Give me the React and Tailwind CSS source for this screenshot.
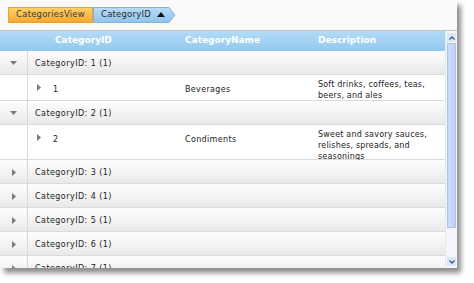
import React from 'react'

const font = { fontFamily: '"DejaVu Sans", Verdana, sans-serif' }

function Tri({ dir = 'right' }) {
  if (dir === 'down') {
    return (
      <svg width="7" height="5" viewBox="0 0 7 5">
        <polygon points="0,0 7,0 3.5,4" fill="#7a7a7a" />
      </svg>
    )
  }
  return (
    <svg width="4" height="7" viewBox="0 0 4 7">
      <polygon points="0,0 4,3.5 0,7" fill="#7a7a7a" />
    </svg>
  )
}

function GroupRow({ id, open }) {
  return (
    <div className="flex shrink-0 h-[24px] bg-gradient-to-b from-[#fefefe] to-[#e9e9e9] border-b border-[#dadada]">
      <div className="w-[28px] border-r border-[#d8d8d8] flex items-center justify-center pt-[1px]">
        <Tri dir={open ? 'down' : 'right'} />
      </div>
      <div className="pl-[7px] pt-[2px] flex items-center text-[8px] tracking-[0.45px] text-[#222]">CategoryID: {id} (1)</div>
    </div>
  )
}

function DataRow({ id, name, desc, h }) {
  return (
    <div className={`flex shrink-0 ${h} bg-white border-b border-[#dadada]`}>
      <div className="w-[28px] border-r border-[#d8d8d8]" />
      <div className="w-[19px] flex items-start pt-[9px] justify-center pl-[2px]">
        <Tri />
      </div>
      <div className="w-[133px] pl-[6px] pt-[9px] text-[8px] tracking-[0.45px] text-[#222]">{id}</div>
      <div className="w-[133px] pl-[5px] pt-[9px] text-[8px] tracking-[0.35px] text-[#222]">{name}</div>
      <div className="flex-1 pl-[5px] pt-[4px] text-[8px] leading-[11px] tracking-[0.2px] text-[#222]">
        {desc.map((l, i) => (
          <div key={i}>{l}</div>
        ))}
      </div>
    </div>
  )
}

export default function App() {
  return (
    <div className="w-[474px] h-[283px] bg-white overflow-hidden" style={font}>
      <div className="w-[457px] h-[268px] bg-[#fcf9fb] flex flex-col overflow-hidden shadow-[4px_5px_5px_rgba(0,0,0,0.45)]">
        {/* breadcrumb */}
        <div className="h-[31px] shrink-0 flex items-center pl-[8px] pb-[1px] border-b border-[#c4c4c4]">
          <div className="h-[16px] w-[85px] justify-center flex items-center text-[8.5px] tracking-[0.2px] text-[#3a3a3a] bg-gradient-to-b from-[#ffd166] to-[#f7a928] border border-[#e5a23a]">
            CategoriesView
          </div>
          <div className="relative h-[16px] w-[83px] flex items-center pl-[8px] text-[8.5px] tracking-[0.2px] text-[#2a2a2a]">
            <svg className="absolute inset-0" width="83" height="16" viewBox="0 0 83 16">
              <defs>
                <linearGradient id="bc" x1="0" y1="0" x2="0" y2="1">
                  <stop offset="0" stopColor="#b9dcf5" />
                  <stop offset="1" stopColor="#8fc4ec" />
                </linearGradient>
              </defs>
              <polygon points="0.5,0.5 76,0.5 82,8 76,15.5 0.5,15.5" fill="url(#bc)" stroke="#7fb4dc" />
            </svg>
            <span className="relative">CategoryID</span>
            <svg className="relative ml-[6px]" width="8" height="5" viewBox="0 0 8 5">
              <polygon points="0,5 4,0 8,5" fill="#111" />
            </svg>
          </div>
        </div>

        <div className="flex-1 flex min-h-0">
          <div className="flex-1 flex flex-col min-w-0 overflow-hidden">
            {/* header */}
            <div className="h-[20px] shrink-0 flex bg-gradient-to-b from-[#b3dbf7] to-[#92c9ef] text-white font-bold text-[9px]">
              <div className="w-[47px]" />
              <div className="w-[133px] pl-[8px] flex items-center">CategoryID</div>
              <div className="w-[133px] pl-[5px] flex items-center">CategoryName</div>
              <div className="flex-1 pl-[5px] flex items-center">Description</div>
            </div>
            <GroupRow id={1} open />
            <DataRow id={1} name="Beverages" desc={['Soft drinks, coffees, teas,', 'beers, and ales']} h="h-[26px]" />
            <GroupRow id={2} open />
            <DataRow
              id={2}
              name="Condiments"
              desc={['Sweet and savory sauces,', 'relishes, spreads, and', 'seasonings']}
              h="h-[35px]"
            />
            <GroupRow id={3} />
            <GroupRow id={4} />
            <GroupRow id={5} />
            <GroupRow id={6} />
            <GroupRow id={7} />
          </div>

          {/* scrollbar */}
          <div className="w-[12px] shrink-0 flex flex-col bg-[#f4f6fb] border-l border-[#e3e8f0] py-[2px] px-[1px] gap-[1px]">
            <div className="h-[9px] shrink-0 flex items-center justify-center bg-[#dbe6f7]">
              <svg width="6" height="4" viewBox="0 0 6 4">
                <polyline points="0.5,3.5 3,1 5.5,3.5" fill="none" stroke="#3b5b8a" strokeWidth="1.3" />
              </svg>
            </div>
            <div className="h-[185px] shrink-0 bg-gradient-to-r from-[#cddcf7] to-[#bdd1f5] border border-[#adc3ec]" />
            <div className="flex-1" />
            <div className="h-[9px] shrink-0 flex items-center justify-center bg-[#dbe6f7]">
              <svg width="6" height="4" viewBox="0 0 6 4">
                <polyline points="0.5,0.5 3,3 5.5,0.5" fill="none" stroke="#3b5b8a" strokeWidth="1.3" />
              </svg>
            </div>
          </div>
        </div>
      </div>
    </div>
  )
}
